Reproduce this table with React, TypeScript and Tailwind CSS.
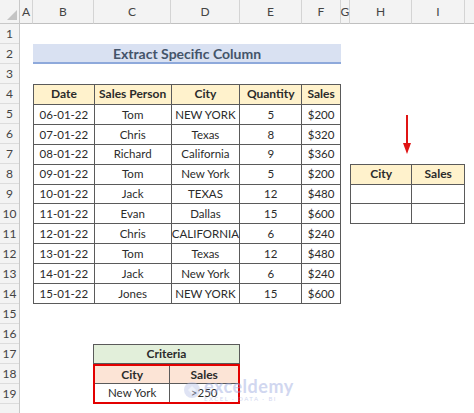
import React from 'react';

const colLetters = ['A', 'B', 'C', 'D', 'E', 'F', 'G', 'H', 'I'];

const salesRows = [
    ['06-01-22', 'Tom', 'NEW YORK', '5', '$200'],
    ['07-01-22', 'Chris', 'Texas', '8', '$320'],
    ['08-01-22', 'Richard', 'California', '9', '$360'],
    ['09-01-22', 'Tom', 'New York', '5', '$200'],
    ['10-01-22', 'Jack', 'TEXAS', '12', '$480'],
    ['11-01-22', 'Evan', 'Dallas', '15', '$600'],
    ['12-01-22', 'Chris', 'CALIFORNIA', '6', '$240'],
    ['13-01-22', 'Tom', 'Texas', '12', '$480'],
    ['14-01-22', 'Jack', 'New York', '6', '$240'],
    ['15-01-22', 'Jones', 'NEW YORK', '15', '$600'],
];

const headers = ['Date', 'Sales Person', 'City', 'Quantity', 'Sales'];

const cell = 'flex items-center justify-center border-r border-b border-[#5a5a5a] leading-none';

const App: React.FC = () => {
    return (
        <div
            className="relative w-[474px] h-[413px] overflow-hidden bg-white text-[#2b2b2b] grid grid-cols-[20px_13px_61px_77px_69px_62px_39px_9px_62px_53px_1fr] grid-rows-[24px_repeat(19,20px)_1fr]"
            style={{ fontFamily: 'Lato, "Liberation Sans", sans-serif' }}
        >
            {/* column headers */}
            <div className="row-start-1 col-start-1 bg-[#f3f3f3] border-r border-b border-[#c8c8c8] relative">
                <div className="absolute right-[2px] bottom-[3px] w-0 h-0 border-l-[10px] border-l-transparent border-b-[10px] border-b-[#c4c4c4]" />
            </div>
            {colLetters.map((l) => (
                <div key={l} className="row-start-1 bg-[#f3f3f3] border-r border-b border-[#d4d4d4] border-b-[#c0c0c0] flex items-center justify-center text-[12px] text-[#444]">
                    {l}
                </div>
            ))}
            <div className="row-start-1 bg-[#f3f3f3] border-b border-[#c0c0c0]" />

            {/* row numbers */}
            <div className="col-start-1 row-start-2 row-span-20 flex flex-col bg-[#f3f3f3] border-r border-[#c8c8c8]">
                {Array.from({ length: 19 }, (_, i) => (
                    <div key={i} className="h-[20px] shrink-0 flex items-center justify-center text-[12px] text-[#444] border-b border-[#dcdcdc]">
                        {i + 1}
                    </div>
                ))}
            </div>

            {/* title */}
            <div className="col-start-3 col-span-5 row-start-3 bg-[#d9e1f2] border-b-2 border-[#8ea9db] flex items-center justify-center text-[14px] font-bold text-[#44546a]">
                Extract Specific Column
            </div>

            {/* main data table */}
            <div className="col-start-3 col-span-5 row-start-5 row-span-11 grid grid-cols-[61fr_77fr_69fr_62fr_39fr] grid-rows-[repeat(11,1fr)] border-l border-t border-[#5a5a5a] text-[11.5px]">
                {headers.map((h) => (
                    <div key={h} className={`${cell} bg-[#fff2cc] font-bold text-[12px]`}>{h}</div>
                ))}
                {salesRows.map((r, i) =>
                    r.map((v, j) => (
                        <div key={`${i}-${j}`} className={cell}>{v}</div>
                    ))
                )}
            </div>

            {/* arrow */}
            <div className="col-start-9 col-span-2 row-start-6 row-span-3 flex justify-center pt-[11px] pr-[1px]">
                <svg width="10" height="40" viewBox="0 0 10 40">
                    <line x1="5" y1="0" x2="5" y2="30" stroke="#e01414" strokeWidth="2" />
                    <polygon points="1,28 9,28 5,39" fill="#e01414" />
                </svg>
            </div>

            {/* output table */}
            <div className="col-start-9 col-span-2 row-start-9 row-span-3 grid grid-cols-[62fr_53fr] grid-rows-3 border-l border-t border-[#5a5a5a] text-[12px]">
                <div className={`${cell} bg-[#fff2cc] font-bold`}>City</div>
                <div className={`${cell} bg-[#fff2cc] font-bold`}>Sales</div>
                <div className={cell} />
                <div className={cell} />
                <div className={cell} />
                <div className={cell} />
            </div>

            {/* criteria */}
            <div className="col-start-4 col-span-2 row-start-18 border border-[#5a5a5a] bg-[#e2efda] flex items-center justify-center font-bold text-[12px] -ml-[1px]">
                Criteria
            </div>
            <div className="col-start-4 col-span-2 row-start-19 row-span-2 -ml-[1px] border-2 border-[#e30000] grid grid-cols-[77fr_69fr] grid-rows-2 text-[12px]">
                <div className="bg-[#fce4d6] font-bold flex items-center justify-center border-r border-b border-[#5a5a5a]">City</div>
                <div className="bg-[#fce4d6] font-bold flex items-center justify-center border-b border-[#5a5a5a]">Sales</div>
                <div className="flex items-center justify-center border-r border-[#5a5a5a] text-[11.5px]">New York</div>
                <div className="flex items-center justify-center text-[11.5px]">&gt;250</div>
            </div>

            {/* watermark */}
            <div className="absolute left-[183px] top-[377px] flex items-center gap-[3px] opacity-45 pointer-events-none">
                <svg width="18" height="18" viewBox="0 0 18 18">
                    <circle cx="9" cy="9" r="8" fill="#b9c3e8" />
                    <path d="M5 9 L9 5 L13 9 L9 13 Z" fill="#dde3f6" />
                </svg>
                <div className="flex flex-col leading-none">
                    <span className="text-[18px] font-bold text-[#9aa8de] tracking-[0.5px]">exceldemy</span>
                    <span className="text-[6px] text-[#9aa8de] tracking-[1.5px] mt-[1px]">EXCEL · DATA · BI</span>
                </div>
            </div>
        </div>
    );
};

export default App;
